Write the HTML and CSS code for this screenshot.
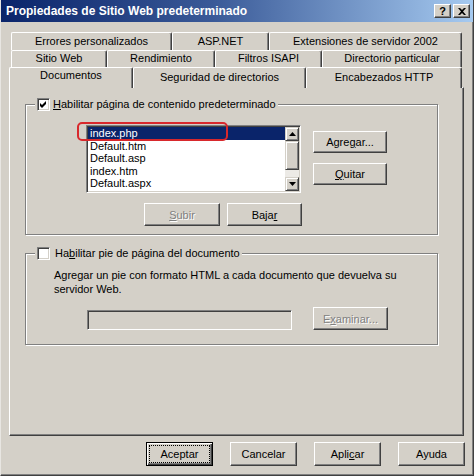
FILE: index.html
```html
<!DOCTYPE html>
<html lang="es">
<head>
<meta charset="utf-8">
<title>Propiedades de Sitio Web predeterminado</title>
<link rel="stylesheet" href="styles.css">
</head>
<body>
<div class="window">
  <div class="titlebar">
    <span class="title">Propiedades de Sitio Web predeterminado</span>
    <div class="tb-buttons">
      <span class="tb-btn help">?</span>
      <span class="tb-btn close"><svg width="8" height="7" viewBox="0 0 8 7"><path d="M0 0h2l2 2 2-2h2L5 3.5 8 7H6L4 5 2 7H0l3-3.5z" fill="#000"/></svg></span>
    </div>
  </div>
  <div class="client">
    <div class="tabs">
      <div class="tabrow row1">
        <div class="tab">Errores personalizados</div>
        <div class="tab">ASP.NET</div>
        <div class="tab">Extensiones de servidor 2002</div>
      </div>
      <div class="tabrow row2">
        <div class="tab">Sitio Web</div>
        <div class="tab">Rendimiento</div>
        <div class="tab">Filtros ISAPI</div>
        <div class="tab">Directorio particular</div>
      </div>
      <div class="tabrow row3">
        <div class="tab active">Documentos</div>
        <div class="tab">Seguridad de directorios</div>
        <div class="tab">Encabezados HTTP</div>
      </div>
    </div>
    <div class="panel">
      <fieldset class="group group1">
        <legend>
          <span class="check"><svg width="7" height="7" viewBox="0 0 7 7"><path d="M0 2 2 4 6 0v3L2 7 0 5z" fill="#000"/></svg></span>
          <span class="legend-text"><u>H</u>abilitar página de contenido predeterminado</span>
        </legend>
        <div class="list-row">
          <div class="listwrap">
            <div class="listbox">
              <ul class="items">
                <li class="selected">index.php</li>
                <li>Default.htm</li>
                <li>Default.asp</li>
                <li>index.htm</li>
                <li>Default.aspx</li>
                <li>iisstart.htm</li>
              </ul>
              <div class="scrollbar">
                <div class="sb-btn"><svg width="7" height="4" viewBox="0 0 7 4"><path d="M3.5 0 7 4H0z" fill="#000"/></svg></div>
                <div class="sb-thumb"></div>
                <div class="sb-track"></div>
                <div class="sb-btn"><svg width="7" height="4" viewBox="0 0 7 4"><path d="M0 0h7L3.5 4z" fill="#000"/></svg></div>
              </div>
            </div>
            <div class="annotation"></div>
          </div>
          <div class="side-buttons">
            <button class="btn side">Agre<u>g</u>ar...</button>
            <button class="btn side"><u>Q</u>uitar</button>
          </div>
        </div>
        <div class="order-row">
          <button class="btn order disabled"><u>S</u>ubir</button>
          <button class="btn order">Baja<u>r</u></button>
        </div>
      </fieldset>
      <fieldset class="group group2">
        <legend>
          <span class="check"></span>
          <span class="legend-text">Ha<u>b</u>ilitar pie de página del documento</span>
        </legend>
        <p class="desc">Agregar un pie con formato HTML a cada documento que devuelva su<br>servidor Web.</p>
        <div class="footer-row">
          <div class="textbox"></div>
          <button class="btn browse disabled">E<u>x</u>aminar...</button>
        </div>
      </fieldset>
    </div>
    <div class="dialog-buttons">
      <button class="btn dlg default"><span class="focus">Aceptar</span></button>
      <button class="btn dlg">Cancelar</button>
      <button class="btn dlg">Apli<u>c</u>ar</button>
      <button class="btn dlg">Ayuda</button>
    </div>
  </div>
</div>
</body>
</html>
```
FILE: styles.css
```css
* { box-sizing: border-box; }
html, body { margin: 0; padding: 0; }
body {
  width: 474px;
  height: 476px;
  overflow: hidden;
  background: #d4d0c8;
  font-family: "Liberation Sans", Arial, sans-serif;
  font-size: 11px;
  color: #000;
}
.window {
  width: 474px;
  height: 476px;
  display: flex;
  flex-direction: column;
  background: #d4d0c8;
  border-left: 1px solid #e8e6e2;
  border-right: 1px solid #404040;
  border-bottom: 1px solid #404040;
  box-shadow: inset -1px -1px #808080;
}
.titlebar {
  flex: none;
  height: 22px;
  display: flex;
  align-items: center;
  justify-content: space-between;
  padding: 0 3px 0 5px;
  background: linear-gradient(to right, #0a246a 0%, #3a5a98 45%, #a6caf0 100%);
  color: #fff;
  font-weight: bold;
  font-size: 12px;
}
.tb-buttons { display: flex; gap: 2px; }
.tb-btn {
  width: 17px;
  height: 14px;
  display: flex;
  align-items: center;
  justify-content: center;
  background: #d4d0c8;
  color: #000;
  border: 1px solid;
  border-color: #fff #404040 #404040 #fff;
  box-shadow: inset -1px -1px #808080;
  font-size: 11px;
  font-weight: bold;
}
.client {
  flex: 1;
  padding: 10px 0 0 8px;
}
.tabs { width: 455px; }
.tabrow { display: grid; }
.row1 { grid-template-columns: 161px 97px 1fr; height: 18px; margin: 0 2px; }
.row2 { grid-template-columns: 96px 108px 107px 1fr; height: 17px; margin: 0 2px; }
.row3 { grid-template-columns: 124px 173px 1fr; height: 20px; margin: 0 2px 0 0; }
.tab {
  border-top: 1px solid #fff;
  border-left: 1px solid #fff;
  border-right: 1px solid #404040;
  box-shadow: inset -1px 0 #808080;
  border-radius: 2px 2px 0 0;
  background: #d4d0c8;
  text-align: center;
  white-space: nowrap;
  overflow: hidden;
}
.row1 .tab { line-height: 16px; }
.row2 .tab { line-height: 15px; }
.row3 .tab { line-height: 19px; }
.row3 .tab.active {
  position: relative;
  z-index: 1;
  height: 21px;
  line-height: 14px;
}
.panel {
  width: 455px;
  height: 349px;
  border-top: 1px solid #fff;
  border-left: 1px solid #fff;
  border-right: 1px solid #404040;
  border-bottom: 1px solid #404040;
  box-shadow: inset -1px -1px #808080;
  padding: 10px 0 0 15px;
}
.group {
  margin: 0;
  padding: 0;
  width: 413px;
  min-inline-size: 0;
  border: 1px solid #808080;
  box-shadow: inset 1px 1px #fff, 1px 1px #fff;
}
.group legend {
  margin-left: 9px;
  padding: 0 2px;
  height: 13px;
  display: flex;
  align-items: center;
  background: #d4d0c8;
}
.group1 legend { gap: 3px; }
.group2 legend { gap: 5px; }
.legend-text { line-height: 13px; }
.check {
  width: 13px;
  height: 13px;
  flex: none;
  display: flex;
  align-items: center;
  justify-content: center;
  background: #fff;
  border: 1px solid;
  border-color: #808080 #fff #fff #808080;
  box-shadow: inset 1px 1px #404040, inset -1px -1px #d4d0c8;
}
.group1 { padding-bottom: 8px; }
.list-row {
  display: flex;
  margin: 14px 0 0 60px;
}
.listwrap {
  position: relative;
  width: 215px;
  height: 68px;
  flex: none;
}
.listbox {
  display: flex;
  width: 215px;
  height: 68px;
  background: #fff;
  border: 1px solid;
  border-color: #808080 #fff #fff #808080;
  box-shadow: inset 1px 1px #404040, inset -1px -1px #d4d0c8;
  padding: 1px;
}
.items {
  flex: 1;
  list-style: none;
  margin: 0;
  padding: 0;
  overflow: hidden;
}
.items li {
  height: 12.6px;
  line-height: 12.6px;
  padding-left: 2px;
  white-space: nowrap;
}
.items li.selected {
  background: #0a246a;
  color: #fff;
}
.scrollbar {
  width: 14px;
  flex: none;
  display: flex;
  flex-direction: column;
}
.sb-btn, .sb-thumb {
  background: #d4d0c8;
  border: 1px solid;
  border-color: #d4d0c8 #404040 #404040 #d4d0c8;
  box-shadow: inset 1px 1px #fff, inset -1px -1px #808080;
}
.sb-btn {
  height: 14px;
  display: flex;
  align-items: center;
  justify-content: center;
}
.sb-thumb { height: 29px; }
.sb-track {
  flex: 1;
  background: #eceae6;
}
.annotation {
  position: absolute;
  left: -9px;
  top: -3px;
  width: 151px;
  height: 19px;
  border: 2px solid #d8282c;
  border-radius: 5px;
}
.side-buttons {
  display: flex;
  flex-direction: column;
  gap: 10px;
  margin: 6px 0 0 12px;
}
.btn {
  font: inherit;
  color: #000;
  background: #d4d0c8;
  border: 1px solid;
  border-color: #fff #404040 #404040 #fff;
  box-shadow: inset -1px -1px #808080;
  padding: 0;
  display: flex;
  align-items: center;
  justify-content: center;
  white-space: nowrap;
}
.btn.disabled {
  color: #808080;
  text-shadow: 1px 1px #fff;
}
.side { width: 74px; height: 22px; }
.order-row {
  display: flex;
  gap: 7px;
  margin: 10px 0 0 118px;
}
.order { width: 76px; height: 23px; }
.order + .order { width: 75px; }
.group2 {
  margin-top: 12px;
  padding-bottom: 14px;
}
.desc {
  margin: 8px 0 0 28px;
  line-height: 14px;
}
.footer-row {
  display: flex;
  align-items: flex-end;
  gap: 21px;
  margin: 11px 0 0 61px;
}
.textbox {
  width: 205px;
  height: 20px;
  background: #d4d0c8;
  border: 1px solid;
  border-color: #808080 #fff #fff #808080;
  box-shadow: inset 1px 1px #404040, inset -1px -1px #d4d0c8;
}
.browse { width: 75px; height: 23px; }
.dialog-buttons {
  width: 456px;
  display: flex;
  justify-content: flex-end;
  gap: 17px;
  margin-top: 6px;
}
.dlg { width: 67px; height: 24px; }
.btn.default {
  border-color: #000;
  box-shadow: inset 1px 1px #fff, inset -1px -1px #404040, inset -2px -2px #808080;
}
.focus {
  width: 59px;
  height: 16px;
  display: flex;
  align-items: center;
  justify-content: center;
  outline: 1px dotted #000;
}
```
